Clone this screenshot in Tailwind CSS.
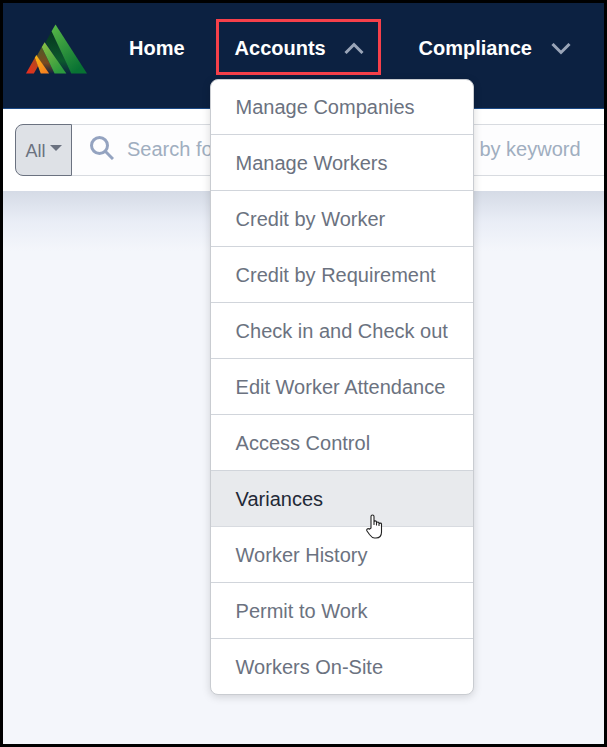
<!DOCTYPE html>
<html lang="en">
<head>
    <meta charset="UTF-8">
    <meta name="viewport" content="width=device-width, initial-scale=1.0">
    <script src="https://cdn.jsdelivr.net/npm/@tailwindcss/browser@4"></script>
    <title>Accounts menu</title>
</head>
<body class="bg-black font-['Liberation_Sans',Arial,sans-serif]">
    <div class="w-[607px] h-[747px] border-[3px] border-black bg-[#f4f6fb] flex flex-col overflow-hidden">
        <!-- top nav -->
        <nav class="relative z-20 h-[106px] shrink-0 bg-[#0c2141] border-b border-[#1c4a86] flex items-start pt-4 pl-[22px] text-[20px] font-bold text-white">
            <svg class="w-[62px] h-[52px] mt-[5px] shrink-0" viewBox="25 24 63 52">
                <defs>
                    <linearGradient id="big" x1="0" y1="0" x2="0.6" y2="1">
                        <stop offset="0" stop-color="#5ab947"/>
                        <stop offset="1" stop-color="#087233"/>
                    </linearGradient>
                    <linearGradient id="shade" x1="0" y1="0" x2="0" y2="1">
                        <stop offset="0" stop-color="#06331f"/>
                        <stop offset="0.7" stop-color="#0b5a2c"/>
                        <stop offset="1" stop-color="#0c2141"/>
                    </linearGradient>
                    <linearGradient id="mid" x1="0" y1="0" x2="0.6" y2="1">
                        <stop offset="0" stop-color="#8cc045"/>
                        <stop offset="1" stop-color="#2c9a3e"/>
                    </linearGradient>
                    <linearGradient id="brown" x1="0" y1="0" x2="0" y2="1">
                        <stop offset="0" stop-color="#4f5a25"/>
                        <stop offset="0.6" stop-color="#7a4a20"/>
                        <stop offset="1" stop-color="#0c2141"/>
                    </linearGradient>
                    <linearGradient id="small" x1="0" y1="0" x2="0.6" y2="1">
                        <stop offset="0" stop-color="#fdb913"/>
                        <stop offset="1" stop-color="#f58220"/>
                    </linearGradient>
                    <linearGradient id="red" x1="1" y1="0" x2="0" y2="1">
                        <stop offset="0" stop-color="#a8501c"/>
                        <stop offset="1" stop-color="#ee2a1e"/>
                    </linearGradient>
                </defs>
                <polygon points="52,31 46,42 66,74 72,74" fill="url(#shade)"/>
                <polygon points="42,47 37,56 49,74 55,74" fill="url(#brown)"/>
                <polygon points="35,58 26,74 34,74 38.500,66" fill="url(#red)"/>
                <polygon points="36.500,55 35,58 41,74 49.500,74" fill="url(#small)"/>
                <polygon points="45,42 42,47 55,74 67,74" fill="url(#mid)"/>
                <polygon points="56,24 52,31 72,74 88,74" fill="url(#big)"/>
            </svg>
            <a href="#" class="ml-[42px] mt-[16px] leading-[26px]">Home</a>
            <div class="relative ml-[31px] w-[165px] h-[56px] border-[3px] border-[#f6404a] flex items-center pl-4 pt-px">
                <span>Accounts</span>
                <svg class="ml-[18px] w-5 h-3" viewBox="0 0 20 12" fill="none" stroke="#9aa5b8" stroke-width="3"><path d="M1.500 11 10 2.500 18.500 11"/></svg>
                <!-- dropdown -->
                <ul class="absolute left-[-9px] top-[57px] w-[264px] bg-white border border-[#c9ccd1] rounded-lg shadow-[0_2px_8px_rgba(0,0,0,0.15)] text-[20px] font-normal text-[#6b7280] overflow-hidden">
                    <li class="h-[55px] pl-[25px] flex items-center border-b border-[#d1d5db]">Manage Companies</li>
                    <li class="h-14 pl-[25px] flex items-center border-b border-[#d1d5db]">Manage Workers</li>
                    <li class="h-14 pl-[25px] flex items-center border-b border-[#d1d5db]">Credit by Worker</li>
                    <li class="h-14 pl-[25px] flex items-center border-b border-[#d1d5db]">Credit by Requirement</li>
                    <li class="h-14 pl-[25px] flex items-center border-b border-[#d1d5db]">Check in and Check out</li>
                    <li class="h-14 pl-[25px] flex items-center border-b border-[#d1d5db]">Edit Worker Attendance</li>
                    <li class="h-14 pl-[25px] flex items-center border-b border-[#d1d5db]">Access Control</li>
                    <li class="relative h-14 pl-[25px] flex items-center border-b border-[#d8dbe0] bg-[#e8eaed] text-[#1f2937]">
                        Variances
                        <svg class="absolute left-[155px] top-[43px] w-[18px] h-[25px]" viewBox="0 0 18 25" fill="#fff" stroke="#222" stroke-width="1.100" stroke-linejoin="round">
                            <path d="M5 14V2.500C5 .5 8 .5 8 2.500V10.500V8C8 6.500 10.500 6.500 10.500 8V11V9C10.500 7.700 13 7.700 13 9V11.500V10C13 8.800 15.500 8.800 15.500 10V18C15.500 21.500 13.500 24 10 24H8.500C6 24 5 22.500 3.500 20.500L1 17C0 15.300 2 14 3.300 15.200Z"/>
                        </svg>
                    </li>
                    <li class="h-14 pl-[25px] flex items-center border-b border-[#d1d5db]">Worker History</li>
                    <li class="h-14 pl-[25px] flex items-center border-b border-[#d1d5db]">Permit to Work</li>
                    <li class="h-[55px] pl-[25px] flex items-center">Workers On-Site</li>
                </ul>
            </div>
            <a href="#" class="ml-[38px] mt-[16px] leading-[26px]">Compliance</a>
            <svg class="ml-[19px] mt-6 w-5 h-3" viewBox="0 0 20 12" fill="none" stroke="#9aa5b8" stroke-width="3"><path d="M1.500 1 10 9.500 18.500 1"/></svg>
        </nav>

        <!-- search bar -->
        <div class="h-[82px] shrink-0 bg-white pl-3 pt-[15px]">
            <div class="flex h-[52px] text-[20px]">
                <button class="w-[57px] shrink-0 bg-[#dee1e6] border border-[#6b7280] rounded-l-lg text-[#6b7280] text-[18px] flex items-center justify-center gap-1 pt-[3px]">
                    All
                    <span class="block w-0 h-0 mb-[7px] border-x-[6px] border-x-transparent border-t-[6px] border-t-[#6b7280]"></span>
                </button>
                <div class="flex-1 flex items-center bg-[#fdfdfe] border-y border-[#d8dbe0] pl-[18px] pb-[2px] text-[#a0aec0] whitespace-nowrap">
                    <svg class="w-6 h-6 shrink-0 mt-[-3px]" viewBox="0 0 24 24" fill="none" stroke="#94a3c0" stroke-width="3"><circle cx="9.500" cy="9.500" r="8"/><path d="M15.500 15.500 23 23"/></svg>
                    <span class="ml-[13px]">Search for any companies and workers by keyword</span>
                </div>
            </div>
        </div>

        <main class="flex-1">
            <div class="h-[60px] bg-linear-to-b from-[#d5dbe6] via-[#e9edf6] to-[#f4f6fb]"></div>
        </main>
    </div>
</body>
</html>
